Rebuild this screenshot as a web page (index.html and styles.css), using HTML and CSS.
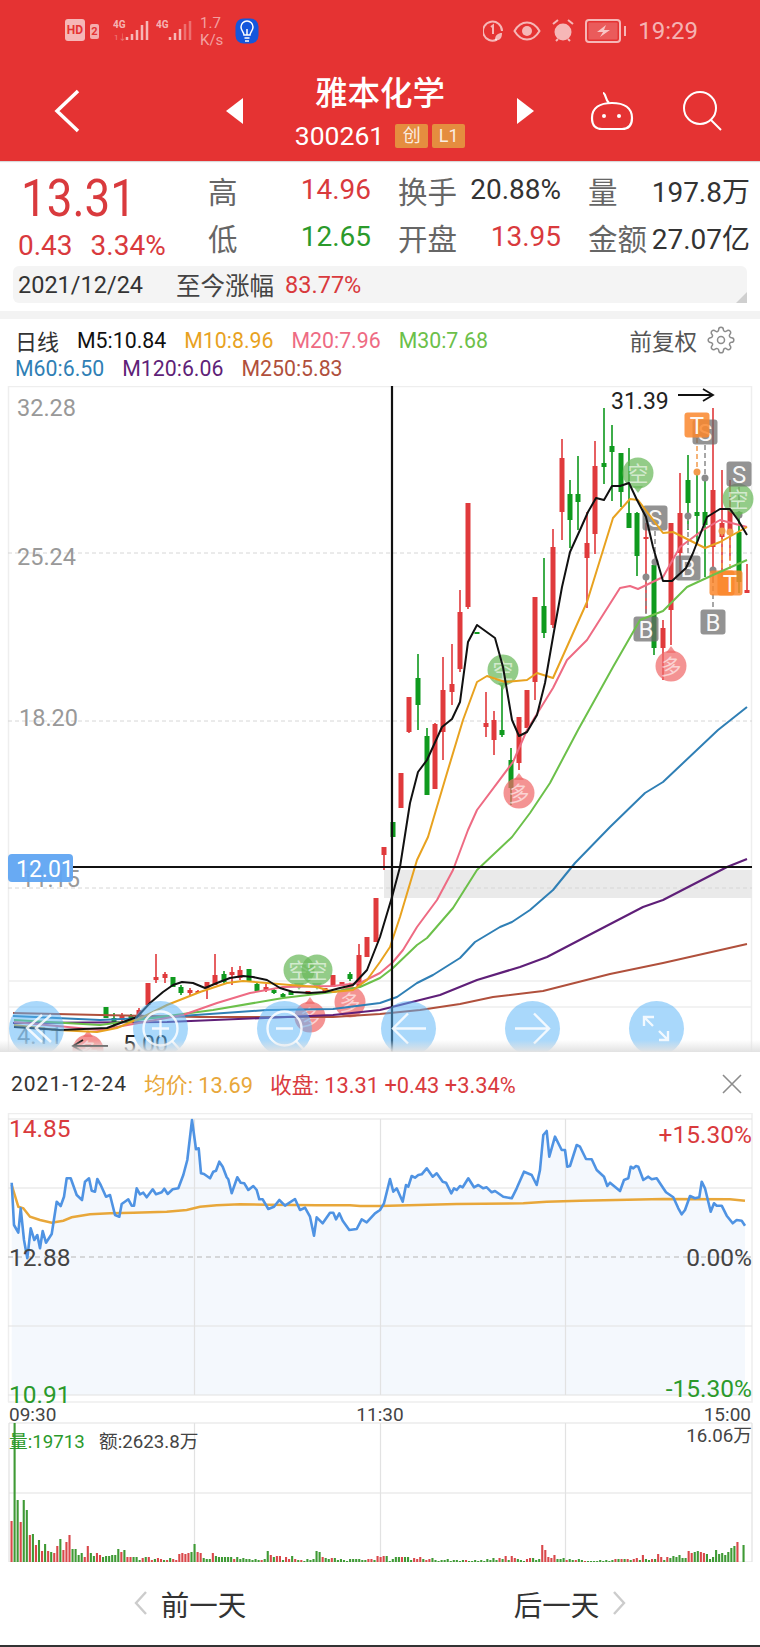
FILE: index.html
```html
<!DOCTYPE html>
<html lang="zh-CN">

<head>
    <meta charset="UTF-8">
    <meta name="viewport" content="width=device-width, initial-scale=1.0">
    <title>雅本化学 300261</title>
    <link rel="stylesheet" href="styles.css">
</head>

<body>
    <header class="topbar">
        <div class="status">
            <div class="status-group">
                <span class="hd">HD</span>
                <span class="sim">2</span>
                <svg class="signal" width="36" height="24" viewBox="0 0 36 24">
                    <text x="0" y="10" class="net">4G</text>
                    <text x="1" y="22" class="net-sub">1↓</text>
                    <path d="M14 22v-3M19 22v-6M24 22V12M29 22V7M34 22V3" />
                </svg>
                <svg class="signal signal-weak" width="36" height="24" viewBox="0 0 36 24">
                    <text x="0" y="10" class="net">4G</text>
                    <path d="M14 22v-3M19 22v-7M24 22V11" />
                    <path class="off" d="M29 22V6M34 22V3" />
                </svg>
                <span class="speed">1.7<br>K/s</span>
                <svg class="bulb" width="24" height="26" viewBox="0 0 24 26">
                    <rect x="0.5" y="0.5" width="23" height="25" rx="8" fill="#1557dc" />
                    <path d="M9 17c0-3-3-4-3-8a6 6 0 0 1 12 0c0 4-3 5-3 8zM9.500 20h5M10 23h4M12 17v-6" fill="none" stroke="#fff" stroke-width="1.500" />
                </svg>
            </div>
            <div class="status-group status-right">
                <svg width="20" height="24" viewBox="0 0 20 24" class="status-icon">
                    <path d="M14 20.500A9.500 9.500 0 1 1 19 12" />
                    <path d="M8 8l2-1.500V15" />
                    <path class="solid" d="M12 21c0-5 3-7 7-7 0 5-2 8-7 7z" />
                </svg>
                <svg width="28" height="20" viewBox="0 0 28 20" class="status-icon">
                    <path d="M1.500 10C5 4 9 1.500 14 1.500S23 4 26.500 10C23 16 19 18.500 14 18.500S5 16 1.500 10z" />
                    <circle class="solid" cx="14" cy="10" r="5" />
                </svg>
                <svg width="24" height="26" viewBox="0 0 24 26" class="status-icon">
                    <circle class="solid" cx="12" cy="14" r="8.500" />
                    <path d="M2 6l5-4M22 6l-5-4M5 23l2-2M19 23l-2-2" />
                </svg>
                <svg width="43" height="24" viewBox="0 0 43 24" class="status-icon">
                    <rect x="1" y="1" width="34" height="22" rx="3" />
                    <rect class="fill-soft" x="3.500" y="3.500" width="29" height="17" rx="1" />
                    <path class="solid" d="M21 6l-9 7h6l-3 5 10-7h-6z" />
                    <path d="M40 7v10" stroke-width="3" />
                </svg>
                <span class="clock">19:29</span>
            </div>
        </div>
        <nav class="stock-nav">
            <svg class="back" width="26" height="44" viewBox="0 0 26 44">
                <path d="M24 2L3 22l21 20" />
            </svg>
            <span class="tri tri-left"></span>
            <div class="stock-id">
                <div class="stock-name">雅本化学</div>
                <div class="stock-code">
                    <span>300261</span>
                    <span class="tag tag-cn">创</span>
                    <span class="tag">L1</span>
                </div>
            </div>
            <span class="tri tri-right"></span>
            <svg class="robot" width="44" height="40" viewBox="0 0 44 40">
                <path d="M2 27C2 17 10 12 22 12s20 5 20 15c0 8-4 11-10 11H12C6 38 2 35 2 27z" />
                <path d="M13 2c3 0 2 7 6 10" />
                <circle class="dot" cx="14" cy="25" r="2" />
                <circle class="dot" cx="29" cy="25" r="2" />
            </svg>
            <svg class="search" width="40" height="40" viewBox="0 0 40 40">
                <circle cx="17" cy="17" r="16" />
                <path d="M28 29l10 10" />
            </svg>
        </nav>
    </header>

    <section class="quote">
        <div class="quote-top">
            <div class="last">
                <div class="last-price">13.31</div>
                <div class="last-change"><span>0.43</span><span>3.34%</span></div>
            </div>
            <div class="stats">
                <div class="stat"><span class="stat-label">高</span><span class="up">14.96</span></div>
                <div class="stat"><span class="stat-label">换手</span><span>20.88%</span></div>
                <div class="stat"><span class="stat-label">量</span><span>197.8万</span></div>
                <div class="stat"><span class="stat-label">低</span><span class="down">12.65</span></div>
                <div class="stat"><span class="stat-label">开盘</span><span class="up">13.95</span></div>
                <div class="stat"><span class="stat-label">金额</span><span>27.07亿</span></div>
            </div>
        </div>
        <div class="since">
            <span class="since-date">2021/12/24</span>
            <span class="since-label">至今涨幅</span>
            <span class="up">83.77%</span>
        </div>
    </section>

    <section class="kline">
        <div class="ma-head">
            <div class="ma-row">
                <span class="ma-title">日线</span>
                <span class="m5">M5:10.84</span>
                <span class="m10">M10:8.96</span>
                <span class="m20">M20:7.96</span>
                <span class="m30">M30:7.68</span>
                <span class="adjust">前复权
                    <svg width="28" height="28" viewBox="0 0 24 24" fill="none" stroke="#8c8c8c" stroke-width="1.300">
                        <circle cx="12" cy="12" r="3" />
                        <path d="M19.400 15a1.650 1.650 0 0 0 .33 1.820l.06.06a2 2 0 0 1 0 2.830 2 2 0 0 1-2.830 0l-.06-.06a1.650 1.650 0 0 0-1.820-.33 1.650 1.650 0 0 0-1 1.510V21a2 2 0 0 1-2 2 2 2 0 0 1-2-2v-.09A1.650 1.650 0 0 0 9 19.400a1.650 1.650 0 0 0-1.820.33l-.06.06a2 2 0 0 1-2.830 0 2 2 0 0 1 0-2.830l.06-.06a1.650 1.650 0 0 0 .33-1.820 1.650 1.650 0 0 0-1.510-1H3a2 2 0 0 1-2-2 2 2 0 0 1 2-2h.09A1.650 1.650 0 0 0 4.600 9a1.650 1.650 0 0 0-.33-1.820l-.06-.06a2 2 0 0 1 0-2.830 2 2 0 0 1 2.830 0l.06.06a1.650 1.650 0 0 0 1.820.33H9a1.650 1.650 0 0 0 1-1.510V3a2 2 0 0 1 2-2 2 2 0 0 1 2 2v.09a1.650 1.650 0 0 0 1 1.510 1.650 1.650 0 0 0 1.820-.33l.06-.06a2 2 0 0 1 2.830 0 2 2 0 0 1 0 2.830l-.06.06a1.650 1.650 0 0 0-.33 1.820V9a1.650 1.650 0 0 0 1.510 1H21a2 2 0 0 1 2 2 2 2 0 0 1-2 2h-.09a1.650 1.650 0 0 0-1.510 1z" />
                    </svg>
                </span>
            </div>
            <div class="ma-row ma-row-second">
                <span class="m60">M60:6.50</span>
                <span class="m120">M120:6.06</span>
                <span class="m250">M250:5.83</span>
            </div>
        </div>

        <div class="kline-chart">
            <!-- viewBox uses page coordinates, so y here = y on the screen -->
            <svg class="chart-svg" width="760" height="666" viewBox="0 386 760 666">
                <path class="frame" d="M8.500 1052V386.500H751.500V1052" />
                <rect x="384" y="870" width="368" height="28" fill="#eaeaea" />
                <path class="dash" d="M8 553H752M8 721H752M8 888H752" />
                <path class="frame" d="M8 981H752M8 1007H752" />
                <text x="17" y="416" class="axis">32.28</text>
                <text x="17" y="565" class="axis">25.24</text>
                <text x="19" y="726" class="axis">18.20</text>
                <text x="21" y="887" class="axis">11.15</text>
                <text x="17" y="1044" class="axis">4.11</text>
                <g id="candles"></g>
                <g id="markers"></g>
                <g id="maLines"></g>
                <text x="611" y="409" class="extreme">31.39</text>
                <path class="extreme-arrow" d="M678 395H713M703 389l10 6-10 6" />
                <text x="123" y="1052" class="extreme">5.00</text>
                <path class="extreme-arrow" d="M108 1046H73M83 1040l-10 6 10 6" />
                <path class="cross" d="M392 386V1052M73 867H752" />
                <rect x="8" y="854" width="65" height="28" rx="4" fill="#5fa5f2" fill-opacity=".94" />
                <text x="16" y="877" class="cross-label">12.01</text>
            </svg>
            <div class="chart-tools">
                <button class="tool"><svg viewBox="0 0 55 55"><path d="M33 14L18 27l15 14M42 14L27 27l15 14" /></svg></button>
                <button class="tool"><svg viewBox="0 0 55 55"><circle cx="27.500" cy="27.500" r="17" /><path d="M19 27.500h17M27.500 19v17M39 40l9 10" /></svg></button>
                <button class="tool"><svg viewBox="0 0 55 55"><circle cx="27.500" cy="27.500" r="17" /><path d="M19 27.500h17M39 40l9 10" /></svg></button>
                <button class="tool"><svg viewBox="0 0 55 55"><path d="M45 27.500H12M27 12.500l-15 15 15 15" /></svg></button>
                <button class="tool"><svg viewBox="0 0 55 55"><path d="M10 27.500h34M29 12.500l15 15-15 15" /></svg></button>
                <button class="tool"><svg viewBox="0 0 55 55"><path d="M15 25v-9h10M15 16l9 9M39 30v9H30M39 39l-9-9" /></svg></button>
            </div>
            <div class="chart-fade"></div>
        </div>
    </section>

    <section class="intraday">
        <div class="day-head">
            <span class="day-date">2021-12-24</span>
            <span class="day-avg">均价: 13.69</span>
            <span class="day-close-price up">收盘: 13.31 +0.43 +3.34%</span>
            <svg class="day-close" width="20" height="20" viewBox="0 0 20 20">
                <path d="M1 1l18 18M19 1L1 19" />
            </svg>
        </div>
        <svg class="chart-svg" width="760" height="449" viewBox="0 1113 760 449">
            <path class="frame" d="M8.500 1402V1113.500H752V1402H8" />
            <path id="priceFill" fill="#f4f8fd" />
            <path class="grid" d="M8 1119H752M8 1188H752M8 1326H752M8 1395H752M194.500 1119V1395M380.500 1119V1395M565.500 1119V1395" />
            <path class="dash-dark" d="M8 1257H752" />
            <path id="avgLine" fill="none" stroke="#e8a73a" stroke-width="2.500" />
            <path id="priceLine" fill="none" stroke="#4f93e3" stroke-width="2.600" stroke-linejoin="round" />
            <text x="9" y="1137" class="day-axis up-fill">14.85</text>
            <text x="9" y="1266" class="day-axis dark-fill">12.88</text>
            <text x="9" y="1403" class="day-axis down-fill">10.91</text>
            <text x="752" y="1143" class="day-axis up-fill end">+15.30%</text>
            <text x="752" y="1266" class="day-axis dark-fill end">0.00%</text>
            <text x="752" y="1397" class="day-axis down-fill end">-15.30%</text>
            <text x="9" y="1421" class="time">09:30</text>
            <text x="380" y="1421" class="time mid">11:30</text>
            <text x="751" y="1421" class="time end">15:00</text>
            <path class="grid" d="M9 1423H752M9 1493H752M9 1562H752M9 1423V1562M752 1423V1562M194.500 1423V1562M380.500 1423V1562M565.500 1423V1562" />
            <g id="volume"></g>
            <text x="9" y="1448" class="vol-label down-fill">量:19713</text>
            <text x="99" y="1448" class="vol-label dark-fill">额:2623.8万</text>
            <text x="752" y="1442" class="vol-label dark-fill end">16.06万</text>
        </svg>
        <footer class="day-nav">
            <div class="day-btn">
                <svg width="13" height="24" viewBox="0 0 13 24"><path d="M12 1L2 12l10 11" /></svg>
                <span>前一天</span>
            </div>
            <div class="day-btn">
                <span>后一天</span>
                <svg width="13" height="24" viewBox="0 0 13 24"><path d="M1 1l10 11L1 23" /></svg>
            </div>
        </footer>
    </section>

    <script src="chart.js"></script>
</body>

</html>
```

FILE: styles.css
```css
* {
    box-sizing: border-box;
}

body {
    font-family: Roboto, 'Noto Sans CJK SC', sans-serif;
    margin: 0;
    width: 760px;
    height: 1647px;
    overflow: hidden;
    background: #fff;
    color: #333;
}

.up {
    color: #d93a3d;
}

.down {
    color: #2b9a2b;
}

/* top red bar */
.topbar {
    height: 161px;
    background: #e53333;
    color: #fff;
    box-shadow: 0 1px 1px rgba(0, 0, 0, 0.15);
}

.status {
    display: flex;
    justify-content: space-between;
    height: 72px;
    padding: 18px 62px 0 65px;
}

.status-group {
    display: flex;
    align-items: flex-start;
    gap: 7px;
}

.status-right {
    gap: 10px;
    align-items: center;
    height: 26px;
}

.hd {
    width: 20px;
    height: 22px;
    margin-top: 1px;
    border-radius: 3px;
    background: rgba(255, 255, 255, 0.65);
    color: #e53333;
    font-size: 12px;
    font-weight: 700;
    line-height: 22px;
    text-align: center;
}

.sim {
    width: 9px;
    height: 15px;
    margin: 6px 7px 0 -2px;
    border-radius: 2px;
    background: rgba(255, 255, 255, 0.6);
    color: #e53333;
    font-size: 11px;
    font-weight: 700;
    line-height: 15px;
    text-align: center;
}

.signal path {
    fill: none;
    stroke: rgba(255, 255, 255, 0.65);
    stroke-width: 2.5;
}

.signal .off {
    stroke: rgba(255, 255, 255, 0.3);
}

.net {
    font-size: 10px;
    font-weight: 700;
    fill: rgba(255, 255, 255, 0.65);
}

.net-sub {
    font-size: 8px;
    fill: rgba(255, 255, 255, 0.4);
}

.signal-weak {
    margin-right: 1px;
}

.speed {
    margin-top: -3px;
    font-size: 15px;
    line-height: 17px;
    color: rgba(255, 255, 255, 0.55);
}

.bulb {
    margin-left: 5px;
}

.status-icon * {
    fill: none;
    stroke: rgba(255, 255, 255, 0.65);
    stroke-width: 2;
}

.status-icon .solid {
    fill: rgba(255, 255, 255, 0.65);
    stroke: none;
}

.status-icon .fill-soft {
    fill: rgba(255, 255, 255, 0.2);
    stroke: none;
}

.clock {
    font-size: 24px;
    color: rgba(255, 255, 255, 0.65);
}

.stock-nav {
    display: flex;
    align-items: center;
    height: 77px;
    padding-left: 54px;
}

.back,
.robot,
.search {
    fill: none;
    stroke: #fff;
}

.back {
    stroke-width: 3.5;
}

.robot {
    margin-left: 56px;
    stroke-width: 2.2;
}

.robot .dot {
    fill: #fff;
    stroke: none;
}

.search {
    margin-left: 49px;
    stroke-width: 2;
}

.tri {
    width: 0;
    height: 0;
    border-top: 13px solid transparent;
    border-bottom: 13px solid transparent;
}

.tri-left {
    margin-left: 146px;
    border-right: 17px solid #fff;
}

.tri-right {
    border-left: 17px solid #fff;
}

.stock-id {
    width: 274px;
    text-align: center;
}

.stock-name {
    margin-top: 3px;
    font-size: 32.5px;
    font-weight: 500;
    line-height: 36px;
}

.stock-code {
    display: flex;
    justify-content: center;
    align-items: center;
    gap: 4px;
    margin-top: 11px;
    font-size: 26.5px;
    line-height: 26px;
}

.stock-code span:first-child {
    margin-right: 7px;
}

.tag {
    width: 33px;
    height: 24px;
    border-radius: 2px;
    background: #e58d3f;
    color: rgba(255, 255, 255, 0.85);
    font-size: 18px;
    line-height: 24px;
}

/* quote panel */
.quote {
    height: 158px;
    padding-top: 7px;
    border-bottom: 8px solid #f3f3f3;
}

.quote-top {
    display: flex;
}

.last {
    width: 208px;
    padding-left: 21px;
    color: #d93a3d;
}

.last-price {
    width: 130px;
    margin-top: 3px;
    font-size: 52px;
    line-height: 56px;
    transform: scaleX(0.88);
    transform-origin: left;
}

.last-change {
    display: flex;
    gap: 18px;
    margin: 2px 0 0 -3px;
    font-size: 28px;
    line-height: 34px;
}

.stats {
    display: grid;
    grid-template-columns: 163px 163px 162px;
    grid-auto-rows: 47px;
    column-gap: 27px;
    margin-top: -2px;
}

.stat {
    display: flex;
    justify-content: space-between;
    align-items: center;
    font-size: 28px;
    color: #333;
}

.stat-label {
    font-size: 29.5px;
    color: #666;
}

.since {
    position: relative;
    display: flex;
    align-items: center;
    height: 37px;
    margin: 3px 13px 0;
    padding-left: 5px;
    border-radius: 6px;
    background: #f4f4f4;
    font-size: 23.5px;
}

.since::after {
    content: "";
    position: absolute;
    right: 0;
    bottom: 0;
    border-left: 11px solid transparent;
    border-bottom: 11px solid #cfcfcf;
}

.since-label {
    margin: 0 11px 0 33px;
    font-size: 24.5px;
    color: #444;
}

/* day k-line */
.ma-head {
    height: 67px;
    padding-top: 7px;
}

.ma-row {
    display: flex;
    align-items: center;
    gap: 18px;
    height: 28px;
    padding: 0 25px 0 15px;
    font-size: 21.3px;
}

.ma-row-second {
    padding-left: 15px;
}

.ma-title {
    font-size: 22px;
    color: #333;
}

.m5 {
    color: #111;
}

.m10 {
    color: #e8a21f;
}

.m20 {
    color: #ee6b83;
}

.m30 {
    color: #6cc04a;
}

.m60 {
    color: #2f7fb5;
}

.m120 {
    color: #5f1f78;
}

.m250 {
    color: #b0503c;
}

.adjust {
    display: flex;
    align-items: center;
    gap: 10px;
    margin-left: auto;
    font-size: 22.5px;
    color: #555;
}

.kline-chart {
    position: relative;
    height: 666px;
    overflow: hidden;
}

.chart-svg {
    display: block;
}

.chart-svg text {
    font-family: Roboto, 'Noto Sans CJK SC', sans-serif;
}

.frame {
    fill: none;
    stroke: #eee;
    stroke-width: 1.5;
}

.dash {
    fill: none;
    stroke: #d6d6d6;
    stroke-width: 1;
    stroke-dasharray: 4 3;
}

.axis {
    font-size: 23.5px;
    fill: #999;
}

.extreme {
    font-size: 23px;
    fill: #222;
}

.extreme-arrow {
    fill: none;
    stroke: #111;
    stroke-width: 1.8;
}

.cross {
    fill: none;
    stroke: #111;
    stroke-width: 2.2;
}

.cross-label {
    font-size: 23px;
    fill: #fff;
}

.marker-text {
    font-size: 21px;
    fill: rgba(255, 255, 255, 0.6);
    text-anchor: middle;
}

.marker-letter {
    font-size: 24px;
    fill: rgba(255, 255, 255, 0.95);
    text-anchor: middle;
}

.chart-tools {
    position: absolute;
    top: 615px;
    left: 9px;
    display: flex;
    gap: 69px;
}

.tool {
    width: 55px;
    height: 55px;
    padding: 0;
    border: none;
    border-radius: 50%;
    background: rgba(90, 180, 248, 0.52);
}

.tool svg {
    display: block;
    fill: none;
    stroke: rgba(255, 255, 255, 0.85);
    stroke-width: 2.4;
}

.chart-fade {
    position: absolute;
    left: 0;
    right: 0;
    bottom: 0;
    height: 12px;
    background: linear-gradient(rgba(226, 226, 226, 0), rgba(226, 226, 226, 1));
}

/* intraday popup part */
.intraday {
    margin-top: 1px;
}

.day-head {
    display: flex;
    align-items: center;
    gap: 17px;
    height: 60px;
    padding: 1px 18px 0 11px;
    font-size: 21.8px;
}

.day-date {
    font-size: 21px;
    letter-spacing: 1px;
}

.day-avg {
    color: #e8a73a;
}

.day-close {
    margin-left: auto;
    fill: none;
    stroke: #8c8c8c;
    stroke-width: 1.6;
}

.grid {
    fill: none;
    stroke: #e2e2e2;
    stroke-width: 1.2;
}

.dash-dark {
    fill: none;
    stroke: #b5b5b5;
    stroke-width: 1.2;
    stroke-dasharray: 5 4;
}

.day-axis {
    font-size: 24.5px;
}

.up-fill {
    fill: #d93a3d;
}

.down-fill {
    fill: #2b9a2b;
}

.dark-fill {
    fill: #444;
}

.end {
    text-anchor: end;
}

.mid {
    text-anchor: middle;
}

.time {
    font-size: 19px;
    fill: #444;
}

.vol-label {
    font-size: 18.7px;
}

.day-nav {
    display: grid;
    grid-template-columns: 1fr 1fr;
    height: 85px;
    padding-bottom: 1px;
    border-bottom: 2px solid #333;
}

.day-btn {
    display: flex;
    justify-content: center;
    align-items: center;
    gap: 14px;
    font-size: 28.5px;
    color: #333;
}

.day-btn svg {
    fill: none;
    stroke: #ccc;
    stroke-width: 2.4;
}
```

FILE: chart.js
```js
const RED = '#e03a3c';
const GREEN = '#0f9a1e';

// x, wick top, wick bottom, body top, body bottom, colour
const candles = [
    [106, 1007, 1018, 1007, 1018, 'g'], [114, 1013, 1027, 1018, 1024, 'g'], [122, 1013, 1022, 1016, 1020, 'r'],
    [131, 1014, 1020, 1016, 1019, 'g'], [139, 1008, 1017, 1010, 1017, 'r'], [148, 983, 1005, 983, 1005, 'r'],
    [156, 954, 983, 977, 980, 'r'], [165, 972, 983, 974, 978, 'r'], [173, 977, 987, 977, 987, 'g'],
    [181, 985, 995, 987, 993, 'g'], [190, 988, 995, 990, 993, 'r'], [198, 990, 993, 991, 993, 'r'],
    [207, 982, 999, 982, 988, 'r'], [215, 954, 985, 975, 985, 'r'], [224, 971, 983, 974, 982, 'g'],
    [232, 967, 985, 972, 975, 'r'], [240, 966, 980, 970, 978, 'r'], [249, 969, 982, 969, 982, 'g'],
    [257, 983, 992, 984, 991, 'g'], [266, 984, 992, 987, 990, 'r'], [274, 989, 994, 990, 993, 'g'],
    [283, 993, 998, 994, 997, 'g'], [291, 992, 995, 992, 995, 'g'], [308, 991, 994, 991, 994, 'r'],
    [325, 988, 992, 988, 992, 'r'], [333, 975, 987, 975, 987, 'r'], [342, 982, 986, 982, 986, 'r'],
    [350, 972, 981, 974, 979, 'g'], [359, 944, 987, 955, 987, 'r'], [367, 937, 957, 937, 957, 'r'],
    [376, 898, 942, 898, 942, 'r'], [384, 847, 870, 847, 855, 'r'], [393, 822, 837, 822, 837, 'g'],
    [401, 773, 808, 773, 808, 'r'], [409, 697, 733, 697, 732, 'r'], [418, 654, 730, 678, 705, 'g'],
    [427, 728, 795, 736, 795, 'g'], [435, 723, 789, 724, 789, 'r'], [443, 657, 760, 690, 732, 'r'],
    [452, 644, 705, 684, 692, 'r'], [460, 590, 672, 612, 669, 'r'], [468, 503, 609, 503, 607, 'r'],
    [477, 632, 634, 632, 634, 'g'], [486, 692, 737, 723, 727, 'r'], [494, 711, 755, 720, 740, 'r'],
    [502, 685, 737, 730, 735, 'g'], [511, 748, 805, 760, 788, 'g'], [519, 717, 770, 717, 763, 'r'],
    [527, 690, 728, 690, 728, 'r'], [535, 597, 700, 597, 682, 'r'], [544, 558, 638, 606, 633, 'g'],
    [553, 529, 628, 547, 625, 'r'], [562, 439, 540, 458, 512, 'r'], [570, 480, 548, 494, 520, 'g'],
    [578, 456, 530, 494, 502, 'g'], [587, 512, 608, 543, 558, 'r'], [595, 441, 554, 466, 534, 'r'],
    [604, 408, 484, 463, 467, 'g'], [612, 425, 501, 446, 452, 'g'], [621, 453, 507, 453, 492, 'g'],
    [629, 448, 528, 513, 528, 'g'], [637, 512, 576, 513, 556, 'g'], [646, 523, 613, 537, 539, 'r'],
    [654, 562, 655, 565, 648, 'g'], [663, 620, 680, 628, 648, 'r'], [671, 523, 645, 523, 610, 'r'],
    [680, 473, 572, 513, 553, 'r'], [688, 455, 530, 480, 503, 'g'], [697, 473, 545, 512, 516, 'g'],
    [705, 477, 577, 512, 525, 'g'], [713, 408, 583, 490, 547, 'r'], [722, 470, 578, 523, 537, 'r'],
    [730, 480, 560, 510, 533, 'r'], [739, 517, 593, 532, 582, 'g'], [747, 564, 593, 590, 593, 'r']
];

const maLines = [
    ['#b0503c', 2, [[13, 1013], [100, 1015], [200, 1017], [333, 1017], [380, 1014], [420, 1010], [460, 1004], [493, 997], [543, 991], [610, 974], [663, 963], [747, 944]]],
    ['#5f1f78', 2.2, [[13, 1023], [167, 1022], [333, 1015], [380, 1010], [400, 1005], [440, 995], [477, 980], [520, 967], [547, 957], [593, 933], [643, 907], [663, 900], [727, 867], [747, 859]]],
    ['#2f7fb5', 2, [[13, 1016], [100, 1020], [167, 1017], [267, 1010], [333, 1009], [380, 1003], [397, 997], [417, 983], [433, 975], [460, 958], [475, 942], [500, 927], [512, 922], [530, 910], [553, 890], [575, 863], [610, 827], [645, 793], [663, 782], [718, 730], [747, 707]]],
    ['#6cc04a', 2, [[14, 1020], [100, 1025], [213, 1010], [283, 998], [333, 992], [360, 987], [380, 978], [393, 968], [417, 945], [427, 938], [453, 908], [477, 870], [512, 837], [530, 813], [550, 783], [578, 730], [613, 667], [640, 620], [663, 611], [687, 587], [713, 575], [747, 560]]],
    ['#ee6b83', 2, [[14, 1022], [100, 1030], [183, 1015], [217, 1003], [250, 993], [283, 987], [333, 986], [360, 983], [380, 973], [393, 962], [403, 950], [417, 927], [437, 900], [453, 870], [468, 830], [477, 810], [513, 762], [527, 730], [553, 688], [567, 660], [587, 640], [620, 588], [630, 586], [638, 589], [663, 577], [680, 547], [703, 530], [720, 520], [747, 527]]],
    ['#e8a21f', 2, [[14, 1025], [57, 1030], [97, 1032], [117, 1028], [143, 1017], [167, 1005], [200, 992], [227, 983], [243, 981], [267, 983], [290, 985], [317, 987], [333, 992], [353, 990], [367, 980], [380, 962], [390, 947], [400, 917], [417, 860], [428, 837], [447, 773], [463, 720], [477, 682], [487, 676], [505, 682], [527, 680], [537, 673], [553, 678], [587, 602], [613, 518], [630, 499], [638, 500], [663, 533], [673, 532], [705, 548], [720, 542], [747, 527]]],
    ['#111', 2, [[14, 1027], [60, 1030], [107, 1028], [123, 1022], [137, 1017], [150, 1003], [163, 992], [173, 985], [182, 982], [193, 983], [205, 988], [217, 983], [230, 978], [243, 976], [253, 977], [267, 980], [280, 988], [293, 992], [310, 993], [325, 992], [340, 988], [353, 985], [367, 970], [380, 937], [392, 897], [400, 867], [410, 803], [418, 772], [427, 760], [442, 727], [452, 719], [460, 702], [468, 642], [477, 625], [495, 638], [503, 667], [512, 720], [519, 736], [527, 732], [537, 715], [545, 683], [553, 637], [562, 587], [570, 552], [580, 530], [588, 512], [596, 498], [604, 500], [612, 486], [620, 486], [629, 483], [637, 500], [646, 517], [653, 547], [663, 581], [672, 581], [686, 568], [693, 553], [707, 517], [720, 509], [730, 509], [738, 520], [747, 535]]]
];

// traced from the reference at 3x, in crop coordinates
const priceLeft = [35,368, 42,495, 55,518, 62,445, 72,540, 82,595, 92,505, 103,540, 112,525, 120,565, 128,513, 138,548, 155,522, 170,425, 182,438, 192,410, 200,355, 212,355, 230,405, 246,420, 255,365, 267,355, 275,392, 285,395, 292,357, 302,375, 318,410, 330,405, 345,465, 358,470, 365,432, 385,418, 395,437, 402,437, 410,385, 420,403, 430,398, 440,412, 458,388, 468,403, 485,397, 493,386, 503,402, 518,388, 535,385, 550,345, 562,300, 576,180, 588,268, 596,265, 603,340, 612,342, 630,355, 640,335, 648,332, 658,305, 668,320, 680,352, 685,358, 695,400, 712,352, 722,368, 733,370, 745,390, 760,378, 770,390, 778,418, 788,418, 805,447, 822,440, 838,420, 855,437, 885,417, 900,450, 915,443, 930,470, 942,527, 950,472, 968,490, 990,458, 1000,458, 1008,478, 1018,460, 1028,482, 1048,510, 1070,507, 1085,478, 1100,487, 1125,460];
const priceRight = [0,450, 12,430, 30,357, 40,395, 50,385, 68,425, 78,375, 85,380, 95,348, 105,353, 115,345, 125,343, 140,325, 158,350, 170,340, 188,365, 198,368, 214,400, 222,385, 230,390, 240,378, 248,382, 265,355, 282,382, 295,375, 310,385, 320,382, 335,397, 345,393, 370,410, 395,415, 410,385, 432,335, 455,345, 470,375, 480,330, 490,225, 500,213, 508,290, 525,230, 545,270, 555,270, 562,320, 570,318, 590,255, 600,260, 618,297, 635,298, 650,330, 672,350, 682,378, 690,368, 720,393, 732,360, 745,355, 752,320, 760,325, 768,318, 775,320, 790,360, 805,350, 815,358, 830,355, 850,385, 858,397, 880,412, 895,445, 905,463, 915,450, 930,408, 945,415, 958,412, 965,365, 975,385, 992,455, 1002,430, 1010,437, 1025,437, 1040,467, 1058,490, 1070,480, 1085,482, 1095,497];
const avgLeft = [35,375, 55,440, 70,445, 90,470, 120,480, 155,488, 190,482, 215,472, 270,463, 330,460, 400,458, 500,455, 560,450, 600,440, 650,436, 720,433, 800,434, 880,435, 950,436, 1050,436, 1080,438];
const avgRight = [0,438, 230,432, 430,430, 500,425, 600,422, 850,417, 1050,418, 1095,422];

// positive = red bar, negative = green bar, one per minute
const volumes = [
    41, -139, -62, 40, -62, -52, 27, -28, 17, -22, 11, -18, 11, -10, 9, 16, -23, 12, 20, 27,
    -13, -13, -7, -9, 5, 16, -9, -6, 9, 7, -5, -6, -6, -7, -7, -13, 10, -12, 5, 5,
    -5, -5, -2, 4, -5, 5, 2, -3, 4, 3, -2, 2, -4, 3, 2, 8, 9, 8, 9, -10,
    -18, 10, 9, -4, -3, -3, 9, -6, -5, -5, -5, -5, -5, 3, -5, -3, -4, -3, -3, -2,
    -3, -2, 2, -3, -11, 7, -5, 6, 6, -2, 5, 3, -6, 3, -2, 2, -1, -3, -2, -3,
    -11, -10, 5, -4, -3, 4, -4, -2, -3, -2, -1, -3, -3, -3, -3, -2, -2, 3, 3, -2,
    6, 5, 6, -6, -1, -3, -5, -5, 5, -5, -5, -2, 4, 3, 5, -3, 2, 3, -4, -2,
    -1, -2, -2, -3, -1, -2, -2, -1, -2, 2, -1, -1, -2, -1, -2, -1, -3, -2, -4, -2,
    4, -3, 6, -2, 6, 4, -3, -2, -1, 3, 4, -4, -2, -3, 17, 12, 5, 4, 7, -3,
    -3, -4, 2, -3, -2, 2, -3, -2, 1, -1, -1, -1, -1, -2, -1, -2, -1, -2, 3, -3,
    3, -3, 3, -2, 3, 4, -2, 7, -3, -2, 3, -3, 8, 5, -2, 5, -4, -6, -5, -7,
    -4, -4, 11, 9, -10, -11, 10, 9, -8, -3, -5, -12, -8, -9, -7, -10, -14, -16, 20, 0,
    -17
];

function toPath(points) {
    return 'M' + points.map(p => p[0].toFixed(1) + ' ' + p[1].toFixed(1)).join('L');
}

function fromCrop(flat, offsetX, offsetY) {
    const points = [];
    for (let i = 0; i < flat.length; i += 2) {
        points.push([offsetX + flat[i] / 3, offsetY + flat[i + 1] / 3]);
    }
    return points;
}

function drawCandles() {
    document.getElementById('candles').innerHTML = candles.map(c => {
        const color = c[5] === 'r' ? RED : GREEN;
        return `<rect x="${c[0] - 0.8}" y="${c[1]}" width="1.6" height="${c[2] - c[1]}" fill="${color}"/>` +
            `<rect x="${c[0] - 2.5}" y="${c[3]}" width="5" height="${c[4] - c[3]}" fill="${color}"/>`;
    }).join('');
}

function drawLines() {
    document.getElementById('maLines').innerHTML = maLines.map(l =>
        `<path d="${toPath(l[2])}" fill="none" stroke="${l[0]}" stroke-width="${l[1]}" stroke-linejoin="round"/>`
    ).join('');
}

function bubble(x, y, label, color, tailUp) {
    const tail = tailUp ? `M${x - 5} ${y - 13}L${x} ${y - 20}L${x + 5} ${y - 13}Z` : `M${x - 5} ${y + 13}L${x} ${y + 20}L${x + 5} ${y + 13}Z`;
    return `<path d="${tail}" fill="${color}"/><circle cx="${x}" cy="${y}" r="15.5" fill="${color}"/>` +
        `<text x="${x}" y="${y + 8}" class="marker-text">${label}</text>`;
}

function box(x, y, label, color) {
    return `<rect x="${x - 12.5}" y="${y - 12.5}" width="25" height="25" rx="3" fill="${color}"/>` +
        `<text x="${x}" y="${y + 9}" class="marker-letter">${label}</text>`;
}

function stem(x, y1, y2, dotY, color) {
    return `<path d="M${x} ${y1}V${y2}" stroke="${color}" stroke-width="1.5" stroke-dasharray="5 3"/>` +
        `<circle cx="${x}" cy="${dotY}" r="3.5" fill="${color}"/>`;
}

function drawMarkers() {
    const green = 'rgba(105, 185, 90, 0.72)';
    const pink = 'rgba(240, 105, 105, 0.72)';
    const gray = 'rgba(105, 105, 105, 0.72)';
    const orange = 'rgba(250, 135, 45, 0.85)';
    const solidGray = '#8a8a8a';
    const solidOrange = '#f29a4c';
    document.getElementById('markers').innerHTML = [
        stem(646, 577, 615, 577, solidGray),
        stem(688, 516, 556, 516, solidGray),
        stem(713, 570, 610, 570, solidGray),
        stem(705, 445, 478, 478, solidGray),
        stem(697, 438, 472, 472, solidOrange),
        stem(722, 531, 572, 531, solidOrange),
        stem(730, 532, 572, 532, solidOrange),
        stem(739, 487, 515, 515, solidGray),
        stem(655, 531, 562, 562, solidGray),
        bubble(638, 473, '空', green, false),
        bubble(503, 670, '空', green, false),
        bubble(299, 970, '空', green, false),
        bubble(317, 970, '空', green, false),
        bubble(738, 499, '空', green, false),
        bubble(671, 666, '多', pink, true),
        bubble(519, 793, '多', pink, true),
        bubble(310, 1017, '多', pink, true),
        bubble(350, 1002, '多', pink, true),
        bubble(88, 1050, '多', pink, true),
        box(655, 518, 'S', gray),
        box(705, 432, 'S', gray),
        box(739, 474, 'S', gray),
        box(646, 629, 'B', gray),
        box(688, 568, 'B', gray),
        box(713, 622, 'B', gray),
        box(697, 425, 'T', orange),
        box(722, 583, '', orange),
        box(730, 583, 'T', orange)
    ].join('');
}

function drawIntraday() {
    const price = fromCrop(priceLeft, 0, 1060).concat(fromCrop(priceRight, 380, 1060));
    const avg = fromCrop(avgLeft, 0, 1060).concat(fromCrop(avgRight, 380, 1060));
    const last = price[price.length - 1];
    document.getElementById('priceLine').setAttribute('d', toPath(price));
    document.getElementById('avgLine').setAttribute('d', toPath(avg));
    document.getElementById('priceFill').setAttribute('d', toPath(price) + `L${last[0]} 1395L${price[0][0]} 1395Z`);
}

function drawVolume() {
    document.getElementById('volume').innerHTML = volumes.map((v, i) => {
        const h = Math.abs(v);
        const color = v > 0 ? '#d9484a' : '#3f9a35';
        return `<rect x="${(10.5 + i * 3.05).toFixed(2)}" y="${1562 - h}" width="2.1" height="${h}" fill="${color}"/>`;
    }).join('');
}

drawCandles();
drawMarkers();
drawLines();
drawIntraday();
drawVolume();
```
